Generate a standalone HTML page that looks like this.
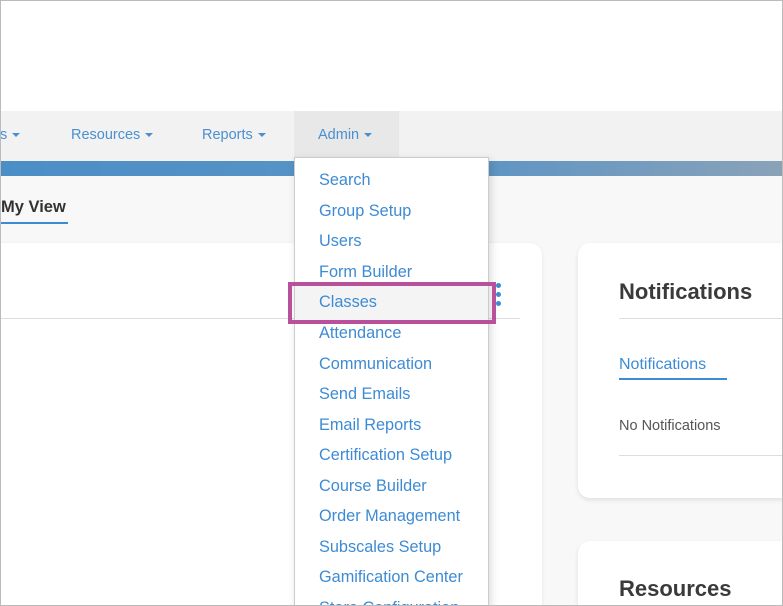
<!DOCTYPE html>
<html style="width:783px;height:606px;overflow:hidden"><head><style>
*{margin:0;padding:0;box-sizing:border-box}
body{width:783px;height:606px;overflow:hidden;position:relative;background:#f8f8f8;font-family:"Liberation Sans",sans-serif;}
.abs{position:absolute}
.nav a{position:absolute;top:127px;color:#4a8fd0;font-size:14.5px}
.caret{display:inline-block;width:0;height:0;border-left:4px solid transparent;border-right:4px solid transparent;border-top:4px solid #4a8fd0;margin-left:5px;vertical-align:middle}
.dd div{position:absolute;left:24px;color:#3d8bd4;font-size:16.3px;white-space:nowrap}
</style></head><body>
<div class="abs" style="left:0;top:0;width:783px;height:111px;background:#fff"></div>
<div class="abs" style="left:0;top:111px;width:783px;height:50px;background:#f2f2f2"></div>
<div class="abs" style="left:294px;top:111px;width:105px;height:50px;background:#e8e8e8"></div>
<div class="nav">
<a style="left:0">s<span class="caret"></span></a>
<a style="left:71px">Resources<span class="caret"></span></a>
<a style="left:202px">Reports<span class="caret"></span></a>
<a style="left:318px">Admin<span class="caret"></span></a>
</div>
<div class="abs" style="left:0;top:161px;width:783px;height:15px;background:linear-gradient(90deg,#4b8ec6,#5c95c4 60%,#8aa2b8)"></div>
<div class="abs" style="left:1px;top:198px;font-size:16.5px;font-weight:bold;color:#333">My View</div>
<div class="abs" style="left:0;top:222px;width:68px;height:2px;background:#3d8bd4"></div>
<div class="abs" style="left:0;top:243px;width:542px;height:370px;background:#fff;border-radius:0 12px 0 0;box-shadow:0 1px 4px rgba(0,0,0,.08)"></div>
<div class="abs" style="left:0;top:318px;width:520px;height:1px;background:#ddd"></div>
<div class="abs" style="left:496px;top:283px;width:5px;height:5px;border-radius:50%;background:#3d8bd4;box-shadow:0 9px 0 #3d8bd4,0 18px 0 #3d8bd4"></div>
<div class="abs" style="left:578px;top:243px;width:215px;height:255px;background:#fff;border-radius:12px;box-shadow:0 2px 5px rgba(0,0,0,.1)"></div>
<div class="abs" style="left:619px;top:279px;font-size:22px;font-weight:bold;color:#3a3a3a">Notifications</div>
<div class="abs" style="left:619px;top:318px;width:170px;height:1px;background:#ddd"></div>
<div class="abs" style="left:619px;top:356px;font-size:16px;color:#3d8bd4">Notifications</div>
<div class="abs" style="left:619px;top:378px;width:108px;height:2px;background:#3d8bd4"></div>
<div class="abs" style="left:619px;top:418px;font-size:14.5px;color:#555">No Notifications</div>
<div class="abs" style="left:619px;top:455px;width:170px;height:1px;background:#ddd"></div>
<div class="abs" style="left:578px;top:541px;width:215px;height:80px;background:#fff;border-radius:12px;box-shadow:0 2px 5px rgba(0,0,0,.1)"></div>
<div class="abs" style="left:619px;top:576px;font-size:22px;font-weight:bold;color:#3a3a3a">Resources</div>
<div class="abs dd" style="left:294px;top:157px;width:195px;height:449px;background:#fff;border:1px solid #ccc;border-bottom:none;box-shadow:2px 3px 8px rgba(0,0,0,.15)">
<div style="top:13px">Search</div>
<div style="top:44px">Group Setup</div>
<div style="top:74px">Users</div>
<div style="top:105px">Form Builder</div>
<div style="top:125px;left:0;width:193px;height:40px;background:#f4f4f4"></div>
<div style="top:135px">Classes</div>
<div style="top:166px">Attendance</div>
<div style="top:197px">Communication</div>
<div style="top:227px">Send Emails</div>
<div style="top:258px">Email Reports</div>
<div style="top:288px">Certification Setup</div>
<div style="top:319px">Course Builder</div>
<div style="top:349px">Order Management</div>
<div style="top:380px">Subscales Setup</div>
<div style="top:410px">Gamification Center</div>
<div style="top:441px">Store Configuration</div>
</div>
<div class="abs" style="left:288px;top:282px;width:208px;height:42px;border:4px solid #b8509b"></div>
<div class="abs" style="left:0;top:0;width:783px;height:606px;border:1px solid #bbb"></div>
</body></html>
